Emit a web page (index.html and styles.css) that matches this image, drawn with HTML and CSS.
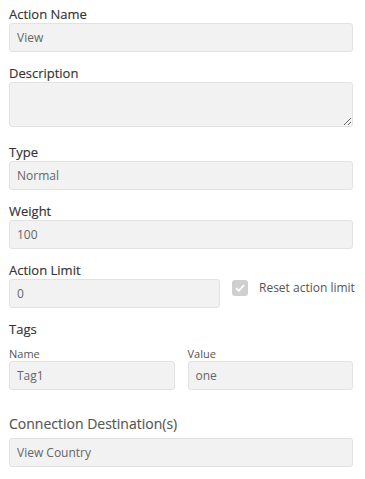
FILE: index.html
```html
<!DOCTYPE html>
<html lang="en">
<head>
    <meta charset="UTF-8">
    <meta name="viewport" content="width=device-width, initial-scale=1.0">
    <title>Action</title>
    <link rel="stylesheet" href="styles.css">
</head>
<body>
    <form class="action-form">
        <div class="field">
            <label class="field-label">Action Name</label>
            <input class="field-input" type="text" value="View">
        </div>
        <div class="field field-desc">
            <label class="field-label">Description</label>
            <textarea class="field-input field-textarea"></textarea>
        </div>
        <div class="field">
            <label class="field-label">Type</label>
            <input class="field-input" type="text" value="Normal">
        </div>
        <div class="field">
            <label class="field-label">Weight</label>
            <input class="field-input" type="text" value="100">
        </div>
        <div class="field">
            <label class="field-label">Action Limit</label>
            <div class="limit-row">
                <input class="field-input" type="text" value="0">
                <label class="check-label">
                    <span class="check-box">
                        <svg width="10" height="8" viewBox="0 0 10 8"><path d="M1 4.2 L3.8 6.8 L9 1.2" fill="none" stroke="#fff" stroke-width="1.8"/></svg>
                    </span>
                    Reset action limit
                </label>
            </div>
        </div>
        <div class="field">
            <label class="field-label">Tags</label>
            <div class="tag-row">
                <div class="tag-col">
                    <label class="small-label">Name</label>
                    <input class="field-input" type="text" value="Tag1">
                </div>
                <div class="tag-col">
                    <label class="small-label">Value</label>
                    <input class="field-input" type="text" value="one">
                </div>
            </div>
        </div>
        <div class="field field-connection">
            <label class="field-label big-label">Connection Destination(s)</label>
            <input class="field-input" type="text" value="View Country">
        </div>
    </form>
</body>
</html>
```

FILE: styles.css
```css
body {
    font-family: 'Open Sans', Arial, sans-serif;
    margin: 0;
    padding: 0 12px 0 9px;
    background: #fff;
    color: #444;
}
.action-form {
    padding-top: 5px;
}
.field {
    margin-bottom: 12px;
}
.field-desc {
    margin-bottom: 16px;
}
.field-label {
    display: block;
    font-size: 13px;
    line-height: 18px;
    color: #333;
    -webkit-text-stroke: 0.15px #333; /* a bit heavier than regular */
}
.field-input {
    display: block;
    box-sizing: border-box;
    width: 100%;
    height: 29px;
    margin: 0;
    padding: 0 7px;
    font-family: 'Open Sans', Arial, sans-serif;
    font-size: 12px;
    color: #666;
    background: #f2f2f2;
    border: 1px solid #e2e2e2;
    border-radius: 3px;
    outline: none;
}
.field-textarea {
    height: 45px;
    resize: vertical;
}
.limit-row {
    display: grid;
    grid-template-columns: 1fr 121px;
    column-gap: 12px;
    align-items: start;
}
.check-label {
    display: flex;
    align-items: center;
    gap: 11px;
    font-size: 12px;
    line-height: 18px;
    color: #555;
    white-space: nowrap;
}
.check-box {
    display: flex;
    align-items: center;
    justify-content: center;
    flex: none;
    width: 16px;
    height: 16px;
    border-radius: 3px;
    background: #cfcfcf;
}
.tag-row {
    display: grid;
    grid-template-columns: 1fr 1fr;
    column-gap: 13px;
    margin-top: 8px;
}
.small-label {
    display: block;
    font-size: 11px;
    line-height: 15px;
    color: #555;
}
.field-connection {
    margin-top: 24px;
}
.big-label {
    font-size: 14px;
    line-height: 19px;
    color: #555;
    -webkit-text-stroke: 0.15px #555;
    margin-bottom: 5px;
}
```
